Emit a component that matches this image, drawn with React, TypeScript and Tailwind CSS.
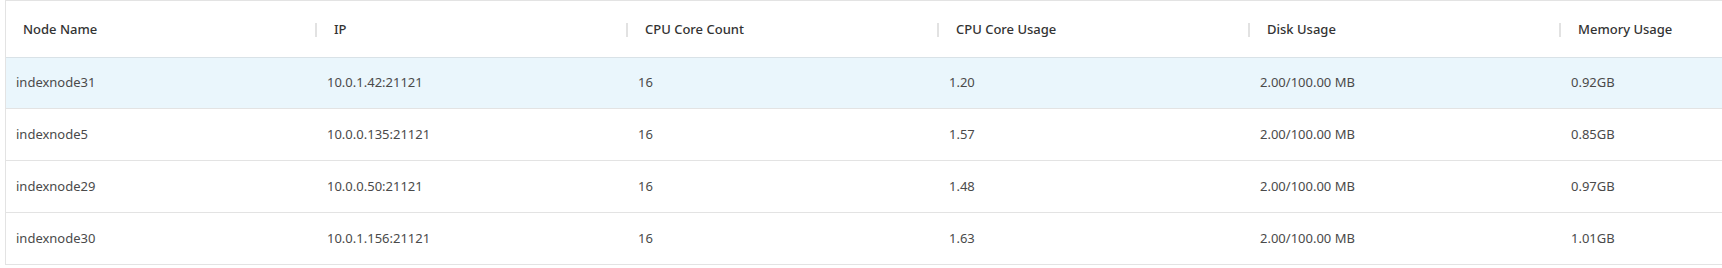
const columns = ['Node Name', 'IP', 'CPU Core Count', 'CPU Core Usage', 'Disk Usage', 'Memory Usage']

const rows = [
  ['indexnode31', '10.0.1.42:21121', '16', '1.20', '2.00/100.00 MB', '0.92GB'],
  ['indexnode5', '10.0.0.135:21121', '16', '1.57', '2.00/100.00 MB', '0.85GB'],
  ['indexnode29', '10.0.0.50:21121', '16', '1.48', '2.00/100.00 MB', '0.97GB'],
  ['indexnode30', '10.0.1.156:21121', '16', '1.63', '2.00/100.00 MB', '1.01GB'],
]

export default function App() {
  return (
    <div className="h-[268px] w-[1722px] overflow-hidden bg-white font-['Noto_Sans',sans-serif]">
      <div className="ml-[5px] w-[1866px] border-l border-t border-[#e3e3e3]">
        {/* header */}
        <div className="flex h-[57px] border-b border-[#d9e2e7]">
          {columns.map((col, i) => (
            <div key={col} className="flex w-[311px] shrink-0 items-center justify-between pt-[2px] pl-[17px]">
              <span className="text-[13px] font-medium text-[#333]">{col}</span>
              {i < columns.length - 1 && <span className="h-[14px] w-[2px] bg-[#e2e2e2]" />}
            </div>
          ))}
        </div>

        {rows.map((row, r) => (
          <div
            key={row[0]}
            className={
              r === 0
                ? 'flex h-[51px] border-b border-[#e3e3e3] bg-[#eaf6fc]'
                : 'flex h-[52px] border-b border-[#e3e3e3]'
            }
          >
            {row.map((cell, c) => (
              <div key={c} className="flex w-[311px] shrink-0 items-center pl-[10px] text-[13px] text-[#4a4a4a]">
                {cell}
              </div>
            ))}
          </div>
        ))}
      </div>
    </div>
  )
}
